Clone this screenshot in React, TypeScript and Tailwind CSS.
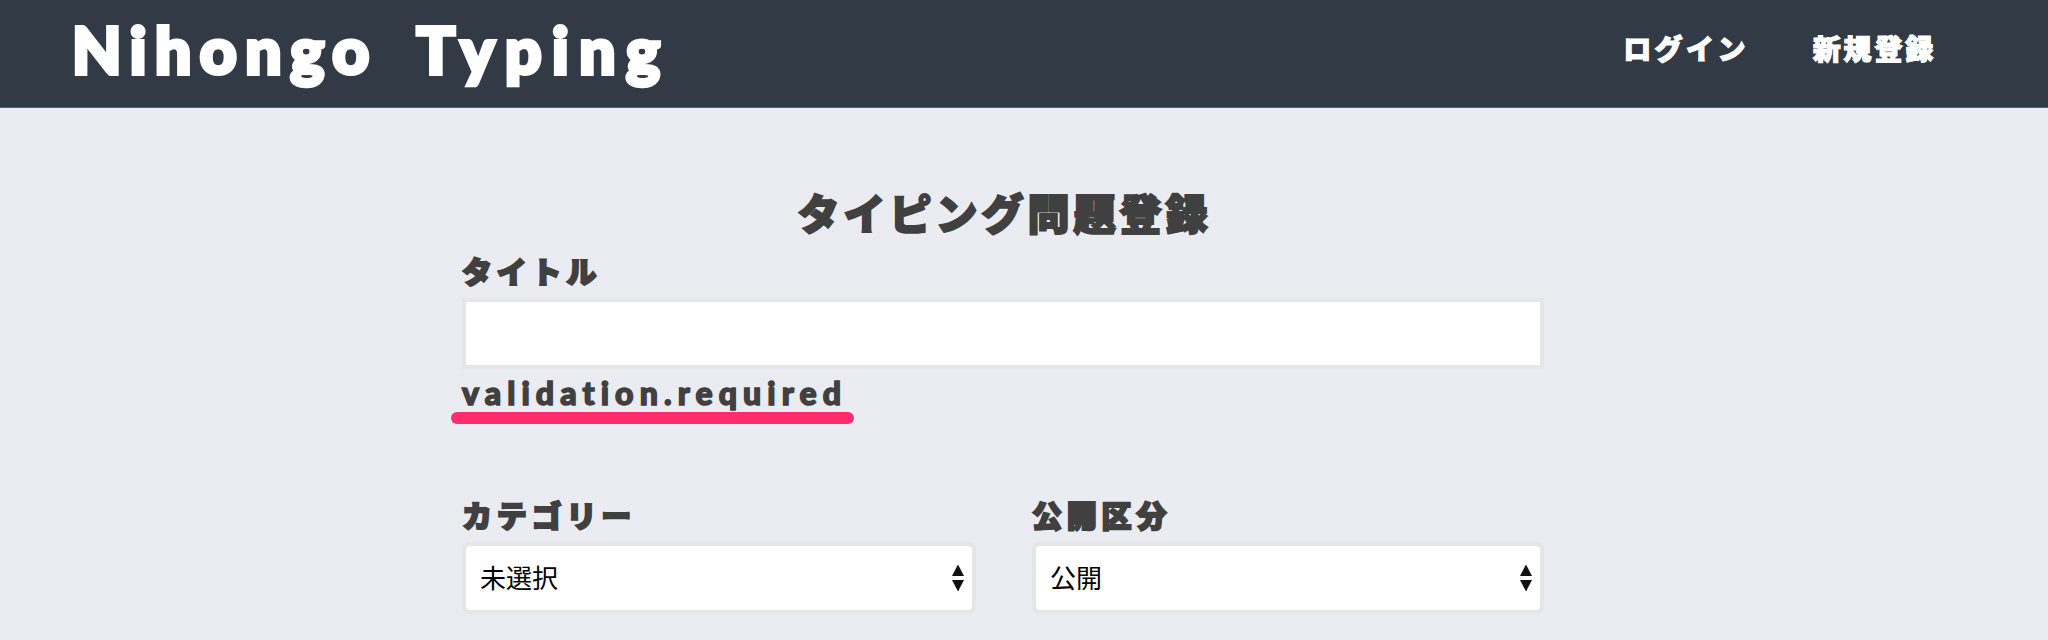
const rounded = "font-['Noto_Sans_CJK_JP','Noto_Sans',sans-serif] font-black";

function Arrows() {
  return (
    <svg width="14" height="28" viewBox="0 0 14 28" className="absolute right-[7px] top-[18px]" fill="#111">
      <path d="M7 0.5 L13 12 L1 12 Z" />
      <path d="M1 16 L13 16 L7 27.5 Z" />
    </svg>
  );
}

function Select({ label, value, className }: { label: string; value: string; className: string }) {
  return (
    <div className={className}>
      <div className={`${rounded} text-[30px] leading-[40px] h-[40px] tracking-[4.8px] text-[#404040] [-webkit-text-stroke:2px_#404040]`}>{label}</div>
      <div className="relative h-[72px] mt-[8px] bg-white border-[4px] border-[#e6e6e8] rounded-[8px] pl-[14px] pb-[4px] flex items-center">
        <span className="font-['Noto_Sans_CJK_JP',sans-serif] text-[26px] text-black">{value}</span>
        <Arrows />
      </div>
    </div>
  );
}

export default function App() {
  return (
    <div className="w-[2048px] h-[640px] overflow-hidden bg-[#ebecf1]">
      <header className="h-[108px] bg-[#323a45] border-b border-[#5a626d] flex items-center justify-between pl-[72px] pr-[112px]">
        <div className="font-['Lato',sans-serif] font-black text-[64px] leading-none tracking-[8.6px] [word-spacing:15px] text-white [-webkit-text-stroke:4px_#ffffff] whitespace-pre pb-[8px]">Nihongo <span className="tracking-[10.5px]">Typing</span></div>
        <nav className="flex gap-[64px] pb-[12px]">
          <a className={`${rounded} text-[28px] tracking-[3.4px] text-white [-webkit-text-stroke:1.2px_#ffffff]`}>ログイン</a>
          <a className={`${rounded} text-[28px] tracking-[2.8px] text-white [-webkit-text-stroke:1.2px_#ffffff]`}>新規登録</a>
        </nav>
      </header>
      <main className="w-[1082px] ml-[462px] pt-[79px]">
        <h1 className={`${rounded} text-center pl-[3px] text-[42px] leading-[50px] tracking-[4px] text-[#404040] [-webkit-text-stroke:2px_#404040]`}>タイピング問題登録</h1>
        <div className={`${rounded} mt-[13px] text-[30px] leading-[40px] tracking-[4.8px] text-[#404040] [-webkit-text-stroke:2px_#404040]`}>タイトル</div>
        <div className="h-[71px] mt-[8px] bg-white border-[4px] border-[#e6e6e8]" />
        <div className="mt-[6px] h-[37px]">
          <span className="font-['Lato',sans-serif] font-black text-[32px] leading-[36px] tracking-[6.1px] text-[#404040] [-webkit-text-stroke:1.5px_#404040] block">validation.required</span>
        </div>
        <div className="h-[12px] w-[403px] -ml-[11px] rounded-full bg-[#ff2d6e]" />
        <div className="flex justify-between mt-[70px]">
          <Select className="w-[514px]" label="カテゴリー" value="未選択" />
          <Select className="w-[512px]" label="公開区分" value="公開" />
        </div>
      </main>
    </div>
  );
}
